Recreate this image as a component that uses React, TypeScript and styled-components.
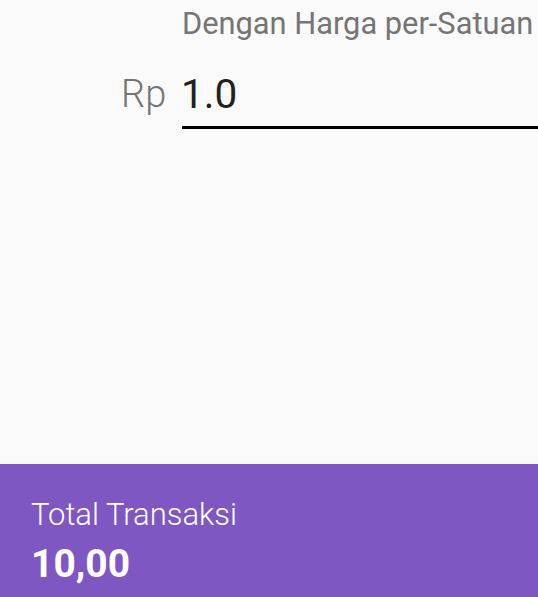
import styled, { createGlobalStyle } from 'styled-components';

const GlobalStyle = createGlobalStyle`
    html, body {
        margin: 0;
        padding: 0;
        background: #fafafa;
    }
    body {
        font-family: Roboto, "Noto Sans", sans-serif;
    }
`;

const App = () => {
    return (
        <>
            <GlobalStyle />
            <Page>
                <FormArea>
                    <FieldLabel>Dengan Harga per-Satuan</FieldLabel>
                    <FieldRow>
                        <Prefix>Rp</Prefix>
                        <InputWrap>
                            <PriceInput defaultValue="1.0" />
                        </InputWrap>
                    </FieldRow>
                </FormArea>
                <TotalBar>
                    <TotalLabel>Total Transaksi</TotalLabel>
                    <TotalValue>10,00</TotalValue>
                </TotalBar>
            </Page>
        </>
    );
};

export default App;

const Page = styled.div`
    width: 538px;
    height: 597px;
    display: flex;
    flex-direction: column;
    overflow: hidden;
    background: #fafafa;
`;

const FormArea = styled.div`
    flex: 1;
    display: flex;
    flex-direction: column;
    padding-left: 182px;
`;

const FieldLabel = styled.div`
    font-size: 30.8px;
    line-height: 30.5px;
    color: #757575;
    margin-top: 9px;
    white-space: nowrap;
`;

const FieldRow = styled.div`
    display: flex;
    align-items: flex-end;
    margin-top: 30px;
    margin-left: -61px;
`;

const Prefix = styled.span`
    font-size: 38px;
    font-weight: 300;
    color: #757575;
    line-height: 48px;
    width: 61px;
    padding-bottom: 11px;
`;

const InputWrap = styled.div`
    flex: 1;
    border-bottom: 3px solid #000;
`;

const PriceInput = styled.input`
    width: 100%;
    border: none;
    outline: none;
    background: transparent;
    font-family: Roboto, sans-serif;
    font-size: 40.5px;
    line-height: 48px;
    height: 48px;
    color: #212121;
    padding: 0 0 8px 0;
    margin: 0;
    margin-left: -1px;
`;

const TotalBar = styled.div`
    height: 133px;
    background: #7e57c2;
    color: #fff;
    padding: 33px 31px 0;
    box-sizing: border-box;
    display: flex;
    flex-direction: column;
`;

const TotalLabel = styled.div`
    font-size: 31px;
    font-weight: 300;
    line-height: 36px;
`;

const TotalValue = styled.div`
    font-size: 39px;
    font-weight: 700;
    line-height: 44px;
    margin-top: 9px;
`;
